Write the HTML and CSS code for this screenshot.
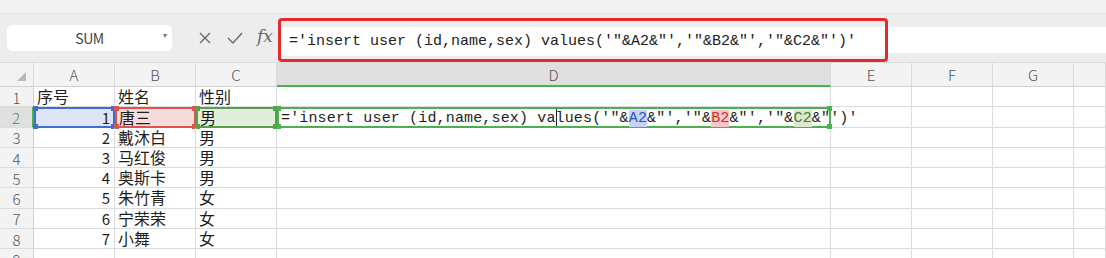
FILE: index.html
```html
<!DOCTYPE html>
<html lang="zh">
<head>
<meta charset="utf-8">
<link rel="stylesheet" href="styles.css">
</head>
<body>
<div class="app">
  <div class="topstrip"></div>
  <div class="fbar">
    <div class="namebox"><span class="nb-text">SUM</span><span class="nb-arrow">▾</span></div>
    <div class="fbtns">
      <svg class="ico" width="16" height="16" viewBox="0 0 16 16"><path d="M3 3 L13 13 M13 3 L3 13" stroke="#666" stroke-width="1.3" fill="none"/></svg>
      <svg class="ico" width="18" height="16" viewBox="0 0 18 16"><path d="M2 8 L7 13 L16 3" stroke="#666" stroke-width="1.3" fill="none"/></svg>
      <span class="fx">fx</span>
    </div>
    <div class="fwrap">
      <div class="finput">='insert user (id,name,sex) values('"&amp;A2&amp;"','"&amp;B2&amp;"','"&amp;C2&amp;"')'</div>
    </div>
    <div class="frest"></div>
  </div>
  <div class="sheet">
    <div class="corner"><span class="tri"></span></div>
    <div class="ch">A</div><div class="ch">B</div><div class="ch">C</div><div class="ch ch-act">D</div><div class="ch">E</div><div class="ch">F</div><div class="ch">G</div><div class="ch"></div>

    <div class="rh">1</div><div class="c">序号</div><div class="c">姓名</div><div class="c">性别</div><div class="c"></div><div class="c"></div><div class="c"></div><div class="c"></div><div class="c"></div>

    <div class="rh rh-act">2</div>
    <div class="c num sel sel-a">1<i class="h tl"></i><i class="h bl"></i><i class="h tr"></i><i class="h br"></i></div>
    <div class="c sel sel-b">唐三<i class="h tl"></i><i class="h bl"></i><i class="h tr"></i><i class="h br"></i></div>
    <div class="c sel sel-c">男<i class="h tl"></i><i class="h bl"></i><i class="h tr"></i><i class="h br"></i></div>
    <div class="c edit"><span class="etext">='insert user (id,name,sex) va<span class="caret"></span>lues('"&amp;<span class="ra">A2</span>&amp;"','"&amp;<span class="rb">B2</span>&amp;"','"&amp;<span class="rc">C2</span>&amp;"')'</span><i class="h tl g"></i><i class="h bl g"></i><i class="h tr g"></i><i class="h br g"></i></div>
    <div class="c"></div><div class="c"></div><div class="c"></div><div class="c"></div>

    <div class="rh">3</div><div class="c num">2</div><div class="c">戴沐白</div><div class="c">男</div><div class="c"></div><div class="c"></div><div class="c"></div><div class="c"></div><div class="c"></div>
    <div class="rh">4</div><div class="c num">3</div><div class="c">马红俊</div><div class="c">男</div><div class="c"></div><div class="c"></div><div class="c"></div><div class="c"></div><div class="c"></div>
    <div class="rh">5</div><div class="c num">4</div><div class="c">奥斯卡</div><div class="c">男</div><div class="c"></div><div class="c"></div><div class="c"></div><div class="c"></div><div class="c"></div>
    <div class="rh">6</div><div class="c num">5</div><div class="c">朱竹青</div><div class="c">女</div><div class="c"></div><div class="c"></div><div class="c"></div><div class="c"></div><div class="c"></div>
    <div class="rh">7</div><div class="c num">6</div><div class="c">宁荣荣</div><div class="c">女</div><div class="c"></div><div class="c"></div><div class="c"></div><div class="c"></div><div class="c"></div>
    <div class="rh">8</div><div class="c num">7</div><div class="c">小舞</div><div class="c">女</div><div class="c"></div><div class="c"></div><div class="c"></div><div class="c"></div><div class="c"></div>
    <div class="rh">9</div><div class="c"></div><div class="c"></div><div class="c"></div><div class="c"></div><div class="c"></div><div class="c"></div><div class="c"></div><div class="c"></div>
  </div>
</div>
</body>
</html>
```

FILE: styles.css
```css
* { box-sizing: border-box; }
html, body { margin: 0; padding: 0; }
body {
  width: 1106px;
  height: 258px;
  overflow: hidden;
  background: #ffffff;
  font-family: "Noto Sans CJK SC", "Noto Sans", sans-serif;
  color: #222;
}
.app { width: 1106px; }
.topstrip {
  height: 14px;
  background: #f2f2f2;
  border-bottom: 1px solid #e2e2e2;
}
.fbar {
  height: 48px;
  background: #ededed;
  display: flex;
  align-items: center;
}
.namebox {
  margin-left: 7px;
  width: 165px;
  height: 26px;
  background: #fff;
  border-radius: 5px;
  position: relative;
  display: flex;
  align-items: center;
  justify-content: center;
}
.nb-text { font-size: 14px; color: #444; letter-spacing: -0.5px; line-height: 1; }
.nb-arrow {
  position: absolute;
  right: 5px;
  top: 6px;
  font-size: 8px;
  color: #777;
  line-height: 1;
}
.fbtns {
  display: flex;
  align-items: center;
  gap: 13px;
  margin-left: 25px;
  width: 80px;
}
.fx {
  font-family: "DejaVu Serif", "Liberation Serif", serif;
  font-style: italic;
  font-size: 17px;
  color: #666;
  line-height: 1;
  margin-top: -3px;
}
.fwrap {
  margin-left: 1px;
  width: 610px;
  height: 44px;
  align-self: flex-end;
  border: 3px solid #e32b2b;
  border-radius: 4px;
  background: #ededed;
  padding-top: 6px;
}
.finput {
  height: 29px;
  background: #fff;
  font-family: "Liberation Mono", "DejaVu Sans Mono", monospace;
  font-size: 15px;
  line-height: 29px;
  padding-left: 8px;
  color: #222;
  white-space: pre;
}
.frest {
  flex: 1;
  height: 26px;
  background: #fff;
  margin-top: 4px;
}
.sheet {
  display: grid;
  grid-template-columns: 34px 81px 81px 81px 554px 81px 81px 81px 32px;
  grid-template-rows: 24px repeat(9, 20.3px);
  border-top: 1px solid #dcdcdc;
}
.corner, .ch, .rh {
  background: #f3f3f3;
  color: #555;
  font-size: 15px;
  font-weight: 300;
  line-height: 1;
  display: flex;
  align-items: center;
  justify-content: center;
}
.corner { border-right: 1px solid #d8d8d8; border-bottom: 1px solid #d0d0d0; }
.tri {
  width: 0; height: 0;
  border-left: 9px solid transparent;
  border-bottom: 9px solid #b8b8b8;
  margin-left: 10px;
  margin-top: 4px;
}
.ch {
  border-right: 1px solid #dadada;
  border-bottom: 1px solid #d0d0d0;
}
.ch-act {
  background: #e0e0e0;
  border-bottom: 2px solid #4caf50;
}
.rh {
  border-right: 1px solid #d0d0d0;
  border-bottom: 1px solid #dcdcdc;
  padding-top: 1px;
}
.rh-act {
  background: #e0e0e0;
  color: #3f9142;
  border-right: 2px solid #4caf50;
}
.c {
  border-right: 1px solid #dcdcdc;
  border-bottom: 1px solid #dcdcdc;
  font-size: 16px;
  line-height: 19px;
  padding-left: 3px;
  white-space: nowrap;
  position: relative;
  color: #1e1e1e;
}
.num { text-align: right; padding-right: 4px; font-size: 15px; }
.sel { border: 2px solid; }
.sel-a { background: #dfe5f6; border-color: #3b6fd6; line-height: 17px; padding-right: 3px; }
.sel-b { background: #f7dcdc; border-color: #e05252; line-height: 17px; padding-left: 2px; }
.sel-c { background: #e1eedc; border-color: #56a04c; line-height: 17px; padding-left: 2px; }
.edit {
  border: 2px solid #4caf50;
  z-index: 2;
  background: #fff;
}
.etext {
  font-family: "Liberation Mono", "DejaVu Sans Mono", monospace;
  font-size: 15px;
  line-height: 17px;
  display: block;
  white-space: pre;
  margin-left: -1px;
  letter-spacing: 0.15px;
}
.caret {
  display: inline-block;
  width: 1px;
  height: 17px;
  background: #222;
  vertical-align: -4px;
  margin: 0 -1px 0 0;
}
.ra { background: #c8d3f3; color: #2b55c6; }
.rb { background: #f6c9c9; color: #c83131; }
.rc { background: #d9e8cf; color: #467a30; }
.h {
  position: absolute;
  width: 5px; height: 5px;
  background: currentColor;
}
.sel-a .h { color: #3b6fd6; }
.sel-b .h { color: #e05252; }
.sel-c .h { color: #56a04c; }
.h.g { color: #4caf50; background: #4caf50; }
.tl { left: -3px; top: -3px; }
.tr { right: -3px; top: -3px; }
.bl { left: -3px; bottom: -3px; }
.br { right: -3px; bottom: -3px; }
```
